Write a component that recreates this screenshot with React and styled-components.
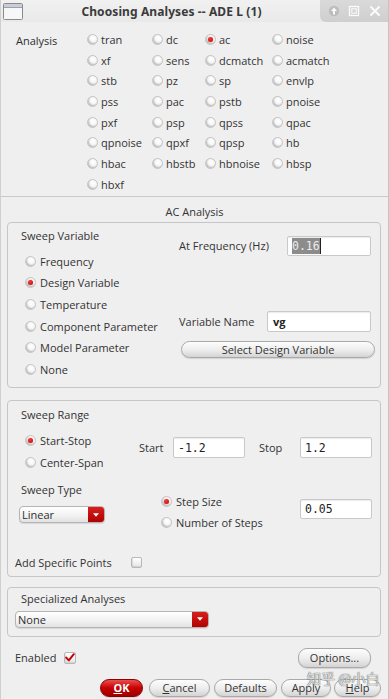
import React from 'react';
import styled, { createGlobalStyle, css } from 'styled-components';

const Global = createGlobalStyle`
  html, body { margin: 0; padding: 0; background: #efefef; }
  body { font-family: "Open Sans", "Noto Sans", sans-serif; font-size: 11px; color: #2e2e2e; }
  * { box-sizing: border-box; }
`;

const Window = styled.div`
  position: relative;
  width: 389px;
  height: 699px;
  overflow: hidden;
  display: flex;
  flex-direction: column;
  background: #efefef;
  border-left: 1px solid #cfcfcf;
  border-right: 1px solid #c4c4c4;
`;

const TitleBar = styled.div`
  height: 22px;
  flex: none;
  display: flex;
  align-items: center;
  background: linear-gradient(#f1f1f1, #e9e9e9);
`;

const WinIcon = styled.svg`
  flex: none;
  margin-left: 2px;
  margin-top: 1px;
`;

const Title = styled.div`
  flex: 1;
  text-align: center;
  font-family: "Noto Sans", "Open Sans", sans-serif;
  font-weight: 700;
  font-size: 12px;
  color: #3b3b3b;
  letter-spacing: 0.1px;
`;

const Controls = styled.div`
  flex: none;
  width: 68px;
  height: 22px;
  align-self: flex-start;
  display: flex;
  align-items: center;
  justify-content: space-around;
  padding: 0 3px 0 4px;
  background: linear-gradient(#dadada, #cfcfcf);
  border-bottom-left-radius: 6px;
`;

const AnalysisGrid = styled.section`
  flex: none;
  display: grid;
  grid-template-columns: 71px 65px 53px 67px 1fr;
  grid-auto-rows: 20.7px;
  padding: 7px 0 1.4px 15px;
  border-bottom: 1px solid #c9c9c9;
`;

const GridLabel = styled.div`
  grid-row: 1 / 9;
  grid-column: 1;
  align-self: start;
  line-height: 20.7px;
  margin-top: 2px;
`;

const RadioItem = styled.label`
  display: flex;
  align-items: center;
  gap: ${p => p.$gap ?? 3}px;
  height: ${p => p.$h ?? 20.7}px;
  white-space: nowrap;
  color: #333;
`;

const Dot = styled.span`
  position: relative;
  flex: none;
  width: 11px;
  height: 11px;
  border-radius: 50%;
  border: 1px solid #c3c3c3;
  background: radial-gradient(circle at 55% 35%, #ffffff 0%, #f6f6f6 50%, #e2e2e2 100%);
  box-shadow: inset 1px -1px 1.5px rgba(0, 0, 0, 0.22);
  ${p => p.$on && css`
    &::after {
      content: '';
      position: absolute;
      left: 50%;
      top: 50%;
      width: 5px;
      height: 5px;
      margin: -2.5px 0 0 -2.5px;
      border-radius: 50%;
      background: radial-gradient(circle at 40% 35%, #ff3a3a, #b80000);
      box-shadow: 0 0 1px rgba(200, 0, 0, 0.6);
    }
  `}
`;

const Heading = styled.div`
  flex: none;
  height: 25px;
  padding-top: 7px;
  text-align: center;
  line-height: 15px;
  color: #333;
`;

const Group = styled.div`
  flex: none;
  height: ${p => p.$h}px;
  margin: ${p => p.$mt ?? 0}px 7px 0 6px;
  border: 1px solid #c6c6c6;
  border-radius: 4px;
`;

const Row = styled.div`
  display: flex;
  align-items: ${p => p.$align ?? 'flex-start'};
  margin-top: ${p => p.$mt ?? 0}px;
  padding-left: ${p => p.$pl ?? 0}px;
`;

const Col = styled.div`
  display: flex;
  flex-direction: column;
  flex: none;
  width: ${p => (p.$w ? `${p.$w}px` : 'auto')};
  padding-top: ${p => p.$pt ?? 0}px;
  padding-left: ${p => p.$pl ?? 0}px;
`;

const Label = styled.div`
  flex: none;
  line-height: 15px;
  width: ${p => (p.$w ? `${p.$w}px` : 'auto')};
  margin-top: ${p => p.$mt ?? 0}px;
  margin-left: ${p => p.$ml ?? 0}px;
  color: #333;
  white-space: nowrap;
`;

const Field = styled.div`
  flex: none;
  display: flex;
  align-items: center;
  width: ${p => p.$w}px;
  height: ${p => p.$h ?? 21}px;
  margin-top: ${p => p.$mt ?? 0}px;
  padding-left: 4px;
  background: #fff;
  border: 1px solid #c9c9c9;
  border-radius: 2px;
  box-shadow: inset 0 1px 1px rgba(0, 0, 0, 0.08);
  font-family: "DejaVu Sans Mono", "Liberation Mono", monospace;
  font-size: 11.5px;
  color: #222;
  ${p => p.$sans && css`
    font-family: "Open Sans", sans-serif;
    font-size: 11px;
    font-weight: 700;
    padding-left: 5px;
  `}
`;

const Selected = styled.span`
  background: #8c8c8c;
  color: #ececec;
  padding: 1px 0;
  border-right: 1px solid #222;
`;

const Pill = styled.button`
  flex: none;
  width: ${p => p.$w}px;
  height: ${p => p.$h ?? 18}px;
  margin-top: ${p => p.$mt ?? 0}px;
  margin-left: ${p => p.$ml ?? 0}px;
  padding: 0;
  border: 1px solid #a9a9a9;
  border-radius: 9px;
  background: linear-gradient(#fdfdfd 0%, #ececec 55%, #d4d4d4 100%);
  box-shadow: 0 1px 1px rgba(0, 0, 0, 0.12);
  font-family: "Open Sans", sans-serif;
  font-size: 11px;
  color: #333;
  cursor: default;
  ${p => p.$primary && css`
    border-color: #8e0000;
    background: linear-gradient(#e85050 0%, #c90000 50%, #9c0000 100%);
    color: #fff;
    font-weight: 700;
  `}
`;

const U = styled.span`
  text-decoration: underline;
`;

const Combo = styled.div`
  flex: none;
  display: flex;
  align-items: center;
  width: ${p => p.$w}px;
  height: 17px;
  margin-top: ${p => p.$mt ?? 0}px;
  margin-left: ${p => p.$ml ?? 0}px;
  border: 1px solid #b4b4b4;
  border-radius: 4px;
  background: linear-gradient(#ffffff, #f1f1f1 60%, #e2e2e2);
  box-shadow: 0 1px 1px rgba(0, 0, 0, 0.1);
  overflow: hidden;
`;

const ComboText = styled.span`
  flex: 1;
  padding-left: 2px;
  color: #2e2e2e;
`;

const ComboArrow = styled.span`
  flex: none;
  width: 16px;
  height: 100%;
  display: flex;
  align-items: center;
  justify-content: center;
  background: linear-gradient(#d81e1e, #b20000);
`;

const Box = styled.span`
  flex: none;
  display: flex;
  align-items: center;
  justify-content: center;
  width: ${p => p.$s ?? 11}px;
  height: ${p => p.$s ?? 11}px;
  border: 1px solid #b8b8b8;
  border-radius: 2px;
  background: linear-gradient(#ffffff, #e6e6e6);
  box-shadow: inset 1px -1px 1px rgba(0, 0, 0, 0.1);
`;

const Footer = styled.div`
  flex: none;
  display: flex;
  justify-content: flex-end;
  gap: 4px;
  margin-top: 11px;
  padding-right: 7px;
`;

const Watermark = styled.div`
  position: absolute;
  left: 306px;
  top: 668px;
  font-family: "Noto Sans CJK SC", "Noto Sans", sans-serif;
  font-size: 14px;
  color: rgba(255, 255, 255, 0.8);
  text-shadow: 0 0 1px rgba(60, 60, 60, 0.9), 0 0 1px rgba(60, 60, 60, 0.6);
  pointer-events: none;
  white-space: nowrap;
`;

const analyses = [
  'tran', 'dc', 'ac', 'noise',
  'xf', 'sens', 'dcmatch', 'acmatch',
  'stb', 'pz', 'sp', 'envlp',
  'pss', 'pac', 'pstb', 'pnoise',
  'pxf', 'psp', 'qpss', 'qpac',
  'qpnoise', 'qpxf', 'qpsp', 'hb',
  'hbac', 'hbstb', 'hbnoise', 'hbsp',
  'hbxf',
];

const sweepVars = ['Frequency', 'Design Variable', 'Temperature', 'Component Parameter', 'Model Parameter', 'None'];

const Arrow = () => (
  <svg width="8" height="6" viewBox="0 0 8 6">
    <path d="M1 1.2 L7 1.2 L4 4.8 Z" fill="#fff" />
  </svg>
);

const Radio = ({ on, children, h, gap }) => (
  <RadioItem $h={h} $gap={gap}>
    <Dot $on={on} />
    <span>{children}</span>
  </RadioItem>
);

export default function App() {
  return (
    <>
      <Global />
      <Window>
        <TitleBar>
          <WinIcon width="20" height="17" viewBox="0 0 20 17">
            <rect x="0.5" y="0.5" width="19" height="16" rx="1" fill="#f7f7f7" stroke="#8a8a8a" />
            <rect x="1" y="1" width="18" height="3" fill="#c9ced6" />
            <line x1="1" y1="4.5" x2="19" y2="4.5" stroke="#9aa2ad" />
          </WinIcon>
          <Title>Choosing Analyses -- ADE L (1)</Title>
          <Controls>
            <svg width="12" height="12" viewBox="0 0 12 12">
              <circle cx="6" cy="6" r="5.2" fill="#bdbdbd" />
              <path d="M6 2.5 L9 6 L7 6 L7 9.5 L5 9.5 L5 6 L3 6 Z" fill="#fbfbfb" />
            </svg>
            <svg width="12" height="12" viewBox="0 0 12 12">
              <rect x="1.5" y="1.5" width="9" height="9" fill="none" stroke="#fbfbfb" strokeWidth="1.3" />
              <rect x="3.8" y="3.8" width="4.4" height="4.4" fill="none" stroke="#fbfbfb" strokeWidth="1" />
            </svg>
            <svg width="12" height="12" viewBox="0 0 12 12">
              <path d="M2 2 L10 10 M10 2 L2 10" stroke="#fbfbfb" strokeWidth="2" strokeLinecap="round" />
            </svg>
          </Controls>
        </TitleBar>

        <AnalysisGrid>
          <GridLabel>Analysis</GridLabel>
          {analyses.map(a => (
            <Radio key={a} on={a === 'ac'}>{a}</Radio>
          ))}
        </AnalysisGrid>

        <Heading>AC Analysis</Heading>

        <Group $h={166}>
          <Row>
            <Col $w={171} $pt={5}>
              <Label $ml={13}>Sweep Variable</Label>
              <Col $pl={17} $pt={7.7}>
                {sweepVars.map(v => (
                  <Radio key={v} on={v === 'Design Variable'} h={21.6} gap={4}>{v}</Radio>
                ))}
              </Col>
            </Col>
            <Col $pt={13}>
              <Row $align="center">
                <Label $w={108}>At Frequency (Hz)</Label>
                <Field $w={84} $h={20}>
                  <Selected>0.16</Selected>
                </Field>
              </Row>
              <Row $align="center" $mt={55}>
                <Label $w={88}>Variable Name</Label>
                <Field $w={104} $sans>vg</Field>
              </Row>
              <Pill $w={194} $h={17} $mt={9} $ml={2}>Select Design Variable</Pill>
            </Col>
          </Row>
        </Group>

        <Group $h={177} $mt={12}>
          <Label $ml={13} $mt={6}>Sweep Range</Label>
          <Row $mt={7.5} $pl={17}>
            <Col $w={114}>
              <Radio on h={22} gap={4}>Start-Stop</Radio>
              <Radio h={22} gap={4}>Center-Span</Radio>
            </Col>
            <Row $align="center" $mt={8}>
              <Label $w={34}>Start</Label>
              <Field $w={72}>-1.2</Field>
              <Label $w={41} $ml={14}>Stop</Label>
              <Field $w={72}>1.2</Field>
            </Row>
          </Row>
          <Row $mt={8.5} $pl={13}>
            <Col $w={140}>
              <Label>Sweep Type</Label>
              <Combo $w={86} $mt={9.5} $ml={-2}>
                <ComboText>Linear</ComboText>
                <ComboArrow><Arrow /></ComboArrow>
              </Combo>
            </Col>
            <Col $w={139} $pt={8.75}>
              <Radio on h={21.5} gap={4}>Step Size</Radio>
              <Radio h={21.5} gap={4}>Number of Steps</Radio>
            </Col>
            <Field $w={72} $h={20} $mt={17.5}>0.05</Field>
          </Row>
          <Row $align="center" $mt={21} $pl={7}>
            <Label $w={116}>Add Specific Points</Label>
            <Box />
          </Row>
        </Group>

        <Group $h={50} $mt={10}>
          <Label $ml={13} $mt={3}>Specialized Analyses</Label>
          <Combo $w={194} $mt={5} $ml={7}>
            <ComboText>None</ComboText>
            <ComboArrow><Arrow /></ComboArrow>
          </Combo>
        </Group>

        <Row $align="center" $mt={11} $pl={14}>
          <Label $w={49}>Enabled</Label>
          <Box $s={12}>
            <svg width="10" height="9" viewBox="0 0 10 9">
              <path d="M1.2 4.6 L3.8 7.4 L8.8 1.2" fill="none" stroke="#c80000" strokeWidth="2" strokeLinecap="round" strokeLinejoin="round" />
            </svg>
          </Box>
          <Pill $w={73} $h={20} $ml={222}>Options...</Pill>
        </Row>

        <Footer>
          <Pill $primary $w={43}><U>O</U>K</Pill>
          <Pill $w={61} $ml={2}><U>C</U>ancel</Pill>
          <Pill $w={63}>Defaults</Pill>
          <Pill $w={50}>Apply</Pill>
          <Pill $w={47} $ml={-1}><U>H</U>elp</Pill>
        </Footer>

        <Watermark>知乎 @小白</Watermark>
      </Window>
    </>
  );
}
